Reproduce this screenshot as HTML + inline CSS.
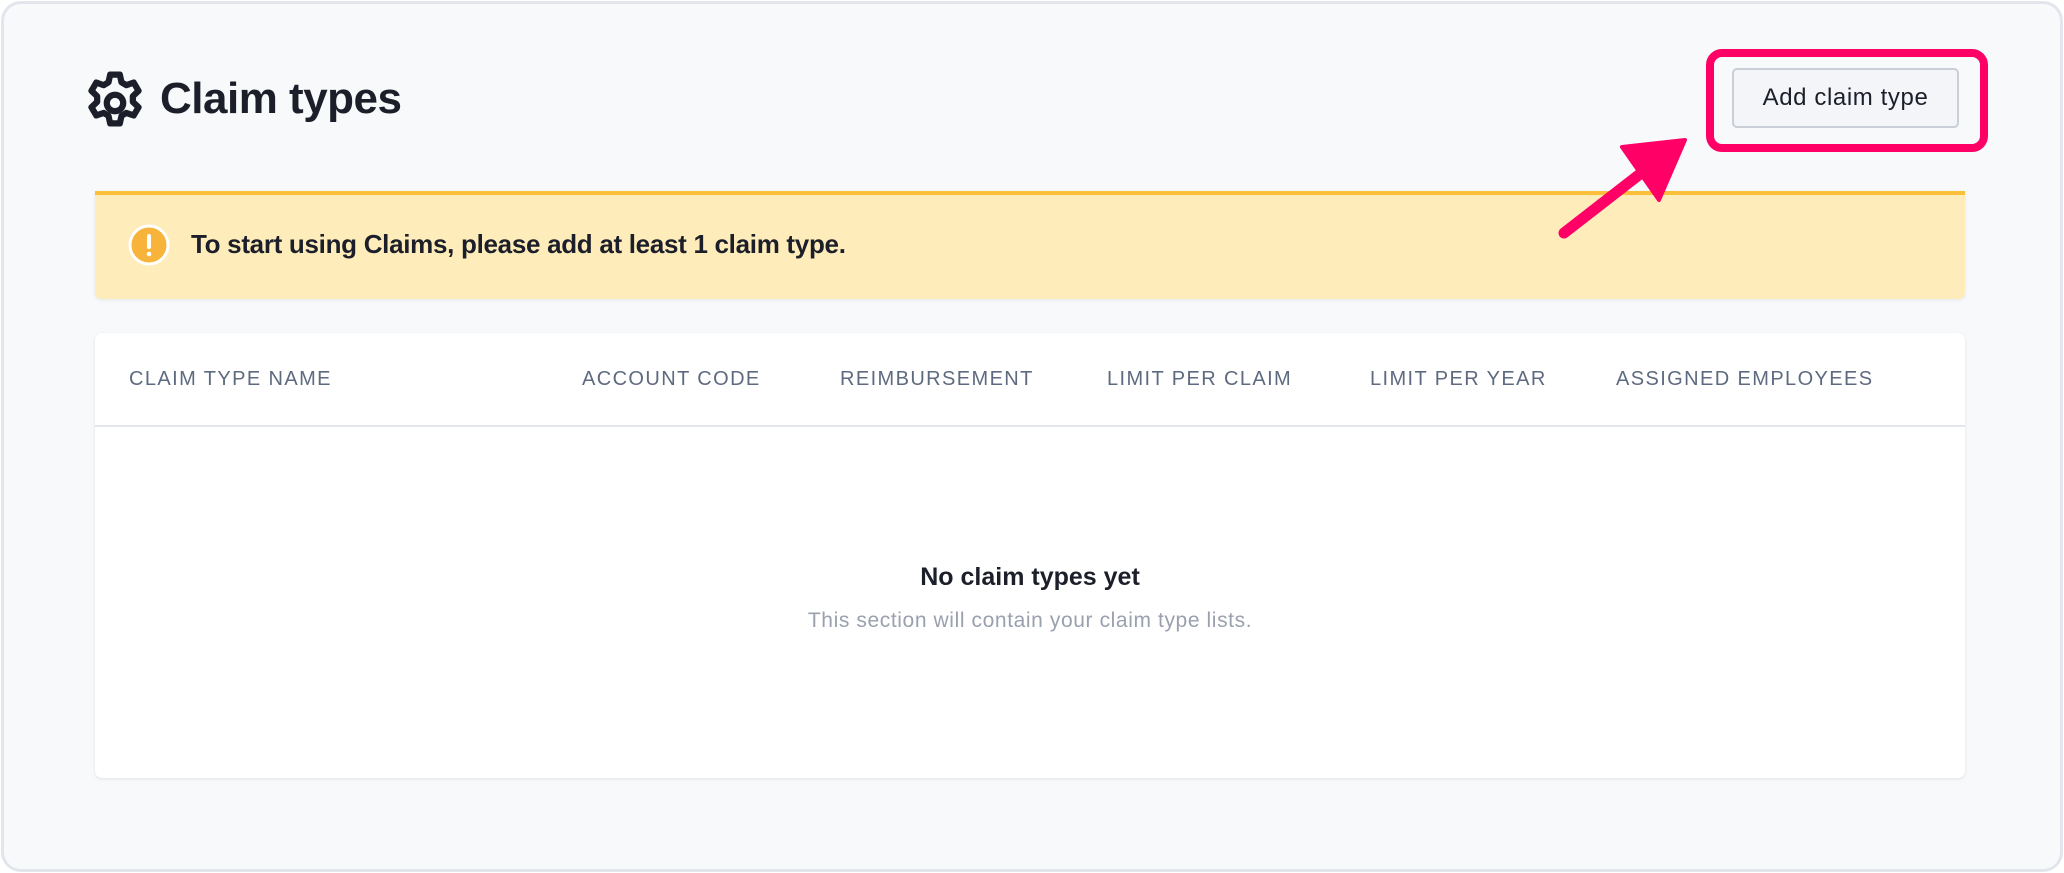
<!DOCTYPE html>
<html><head><meta charset="utf-8"><style>
*{margin:0;padding:0;box-sizing:border-box}
body{width:2064px;height:873px;background:#fff;font-family:"Liberation Sans",sans-serif;position:relative;overflow:hidden}
.frame{position:absolute;left:1px;top:1px;width:2062px;height:871px;background:#f8f9fb;border:3px solid #e2e6ec;border-radius:20px}
.abs{position:absolute;white-space:nowrap}
.title{left:160px;top:74px;font-size:44px;font-weight:bold;color:#1c1f2a;letter-spacing:-0.5px}
.banner{left:95px;top:191px;width:1870px;height:108px;background:#feecba;border-top:4px solid #fbbf3a;border-radius:0 0 6px 6px;box-shadow:0 1px 3px rgba(0,0,0,.08)}
.btext{left:191px;top:229px;font-size:26px;font-weight:bold;color:#1c1f2a;letter-spacing:-0.3px}
.btn{left:1732px;top:68px;width:227px;height:60px;background:#f4f5f8;border:2px solid #c9ced7;border-radius:5px;font-size:24px;color:#1c1f2a;text-align:center;line-height:56px;letter-spacing:0.6px}
.pink{left:1706px;top:49px;width:282px;height:103px;border:8px solid #ff0066;border-radius:16px}
.card{left:95px;top:333px;width:1870px;height:445px;background:#fff;border-radius:7px;box-shadow:0 1px 3px rgba(0,0,0,.1)}
.sep{left:95px;top:425px;width:1870px;height:2px;background:#e3e6eb}
.th{top:368px;font-size:20px;color:#5e6a80;letter-spacing:1.4px}
.empty{left:95px;width:1870px;text-align:center}
</style></head><body>
<div class="frame"></div>
<svg class="abs" style="left:81px;top:69px" width="68" height="68" viewBox="0 0 24 24" fill="none" stroke="#1c1f2a" stroke-width="2.2" stroke-linejoin="round"><path d="M10.3 2h3.4l.6 2.7 1.7 1 2.6-.9 1.7 2.9-2 1.9v2l2 1.9-1.7 2.9-2.6-.9-1.7 1-.6 2.7h-3.4l-.6-2.7-1.7-1-2.6.9-1.7-2.9 2-1.9v-2l-2-1.9 1.7-2.9 2.6.9 1.7-1z"/><circle cx="12" cy="12" r="2.9"/></svg>
<div class="abs title">Claim types</div>
<div class="abs banner"></div>
<svg class="abs" style="left:128px;top:224px" width="42" height="42"><circle cx="21" cy="21" r="19" fill="#f8b33a" stroke="#fff" stroke-width="3"/><rect x="19" y="10" width="4" height="15" rx="2" fill="#fff"/><circle cx="21" cy="30" r="2.3" fill="#fff"/></svg>
<div class="abs btext">To start using Claims, please add at least 1 claim type.</div>
<div class="abs btn">Add claim type</div>
<div class="abs pink"></div>
<svg class="abs" style="left:0;top:0" width="2064" height="873"><line x1="1564" y1="233" x2="1640" y2="174" stroke="#ff0066" stroke-width="11" stroke-linecap="round"/><path d="M1685 140 L1622 147 L1659 200 Z" fill="#ff0066" stroke="#ff0066" stroke-width="4" stroke-linejoin="round"/></svg>
<div class="abs card"></div>
<div class="abs sep"></div>
<div class="abs th" style="left:129px">CLAIM TYPE NAME</div>
<div class="abs th" style="left:582px">ACCOUNT CODE</div>
<div class="abs th" style="left:840px">REIMBURSEMENT</div>
<div class="abs th" style="left:1107px">LIMIT PER CLAIM</div>
<div class="abs th" style="left:1370px">LIMIT PER YEAR</div>
<div class="abs th" style="left:1616px">ASSIGNED EMPLOYEES</div>
<div class="abs empty" style="top:563px;font-size:25px;font-weight:bold;color:#1c1f2a">No claim types yet</div>
<div class="abs empty" style="top:609px;font-size:21px;color:#9aa0ae;letter-spacing:0.6px">This section will contain your claim type lists.</div>
</body></html>
